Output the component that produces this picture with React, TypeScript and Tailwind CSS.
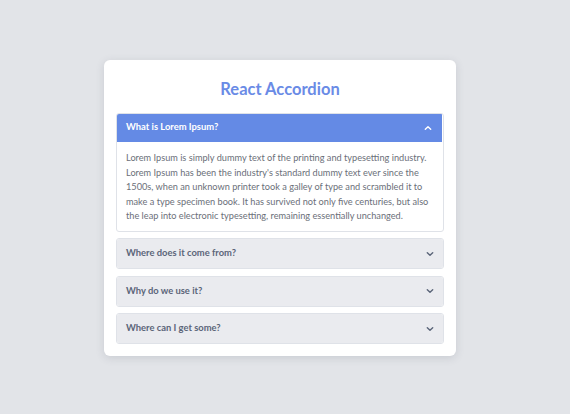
import { useState } from "react";

const items = [
  {
    q: "What is Lorem Ipsum?",
    a: "Lorem Ipsum is simply dummy text of the printing and typesetting industry. Lorem Ipsum has been the industry's standard dummy text ever since the 1500s, when an unknown printer took a galley of type and scrambled it to make a type specimen book. It has survived not only five centuries, but also the leap into electronic typesetting, remaining essentially unchanged.",
  },
  { q: "Where does it come from?", a: "Contrary to popular belief, Lorem Ipsum is not simply random text." },
  { q: "Why do we use it?", a: "It is a long established fact that a reader will be distracted by the readable content of a page." },
  { q: "Where can I get some?", a: "There are many variations of passages of Lorem Ipsum available." },
];

function Chevron({ up }: { up: boolean }) {
  return (
    <svg width="8" height="6" viewBox="0 0 8 6" fill="none" stroke="currentColor" strokeWidth="1.4" strokeLinecap="round" strokeLinejoin="round">
      {up ? <path d="M1.3 4.3 4 1.7 6.7 4.3" /> : <path d="M1.3 1.7 4 4.3 6.7 1.7" />}
    </svg>
  );
}

export default function App() {
  const [open, setOpen] = useState(0);

  return (
    <div className="flex min-h-screen justify-center bg-[#e2e4e8] pr-[10px] pt-[60px] font-['Lato',sans-serif]">
      <div className="h-fit w-[352px] rounded-md bg-white px-3 pb-3 pt-[17px] shadow-[0_2px_8px_rgba(60,70,90,0.15)]">
        <h1 className="mb-3 text-center text-[16.5px] font-bold leading-6 text-[#6a8be6]">React Accordion</h1>
        <div className="flex flex-col gap-[6.5px]">
          {items.map((item, i) => {
            const isOpen = open === i;
            return (
              <div key={item.q} className="overflow-hidden rounded-[3px] border border-[#dfe2e8]">
                <button
                  onClick={() => setOpen(isOpen ? -1 : i)}
                  className={`flex w-full items-center justify-between pl-[9px] pr-[9px] text-left text-[9.4px] font-bold ${
                    isOpen ? "-m-px h-[29px] w-[calc(100%+2px)] bg-[#648ae5] pl-[10px] pr-[10px] text-white" : "h-[29px] bg-[#eaebef] text-[#5b6579]"
                  }`}
                >
                  <span>{item.q}</span>
                  <Chevron up={isOpen} />
                </button>
                {isOpen && (
                  <p className="px-[9px] pb-[7px] pt-[10px] text-[9.2px] leading-[14.5px] text-[#6b6f79]">{item.a}</p>
                )}
              </div>
            );
          })}
        </div>
      </div>
    </div>
  );
}
